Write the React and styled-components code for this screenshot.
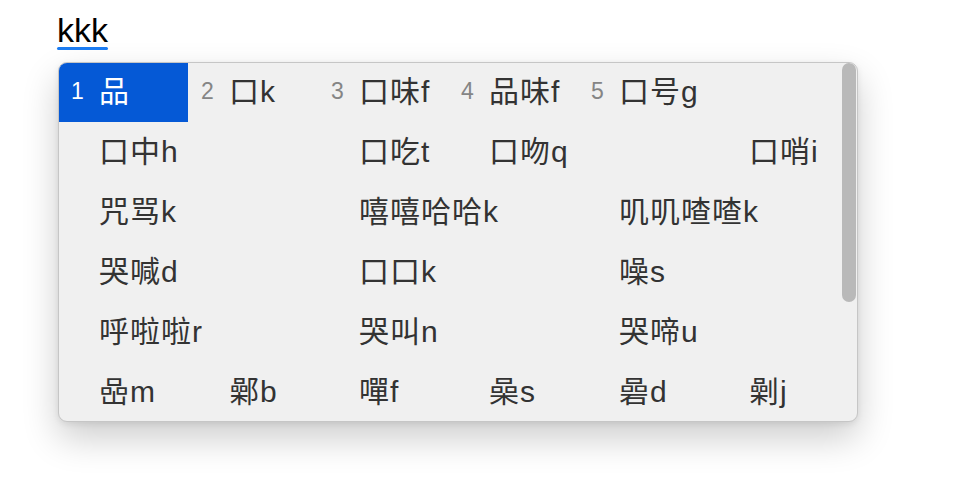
import React from 'react'
import styled, { createGlobalStyle } from 'styled-components'

const Global = createGlobalStyle`
    body {
        margin: 0;
        background: #ffffff;
        font-family: "Liberation Sans", "Noto Sans CJK SC", sans-serif;
    }
`

const Page = styled.div`
    min-height: 504px;
    box-sizing: border-box;
    padding: 14px 0 0 57px;
`

const Marked = styled.div`
    display: inline-flex;
    flex-direction: column;
    font-size: 34px;
    line-height: 32px;
    color: #000;
`

const MarkLine = styled.div`
    height: 3px;
    margin-top: 1px;
    border-radius: 2px;
    background: #1b7cf2;
`

const Panel = styled.div`
    display: flex;
    width: 800px;
    height: 360px;
    margin: 12px 0 0 1px;
    box-sizing: border-box;
    border: 1px solid #c6c6c6;
    border-radius: 9px;
    background: #f0f0f0;
    overflow: hidden;
    box-shadow: 0 16px 36px rgba(0, 0, 0, 0.2), 0 2px 6px rgba(0, 0, 0, 0.08);
`

const Grid = styled.div`
    display: grid;
    grid-template-columns: repeat(6, 130px);
    grid-auto-rows: 60px;
    margin: -1px 0 0 -1px;
`

const Cell = styled.div`
    grid-column: span ${p => p.span || 1};
    display: flex;
    align-items: center;
    padding: 0 0 1px 13px;
    background: ${p => p.active ? '#0559d6' : 'transparent'};
    color: ${p => p.active ? '#ffffff' : '#333333'};
`

const Num = styled.span`
    width: 28px;
    font-size: 23px;
    line-height: 1;
    color: ${p => p.active ? '#ffffff' : '#858585'};
`

const Word = styled.span`
    font-size: 30px;
    line-height: 1;
    letter-spacing: 1px;
    white-space: nowrap;
`

const Track = styled.div`
    flex: 1;
    padding: 0 1px 0 4px;
`

const Thumb = styled.div`
    height: 239px;
    border-radius: 8px;
    background: #b9b9b9;
`

const rows = [
    [['1', '品'], ['2', '口k'], ['3', '口味f'], ['4', '品味f'], ['5', '口号g']],
    [['', '口中h', 2], ['', '口吃t'], ['', '口吻q', 2], ['', '口哨i']],
    [['', '咒骂k', 2], ['', '嘻嘻哈哈k', 2], ['', '叽叽喳喳k', 2]],
    [['', '哭喊d', 2], ['', '口口k', 2], ['', '噪s', 2]],
    [['', '呼啦啦r', 2], ['', '哭叫n', 2], ['', '哭啼u', 2]],
    [['', '喦m'], ['', '鄵b'], ['', '嘽f'], ['', '喿s'], ['', '碞d'], ['', '劋j']],
]

function App() {
    return (
        <Page>
            <Global />
            <Marked>
                kkk
                <MarkLine />
            </Marked>
            <Panel>
                <Grid>
                    {rows.map((row, r) => row.map(([n, w, span], i) => {
                        const active = r === 0 && i === 0
                        return (
                            <Cell key={r + '-' + i} span={span} active={active}>
                                <Num active={active}>{n}</Num>
                                <Word>{w}</Word>
                            </Cell>
                        )
                    }))}
                    <Cell />
                </Grid>
                <Track>
                    <Thumb />
                </Track>
            </Panel>
        </Page>
    )
}

export default App
